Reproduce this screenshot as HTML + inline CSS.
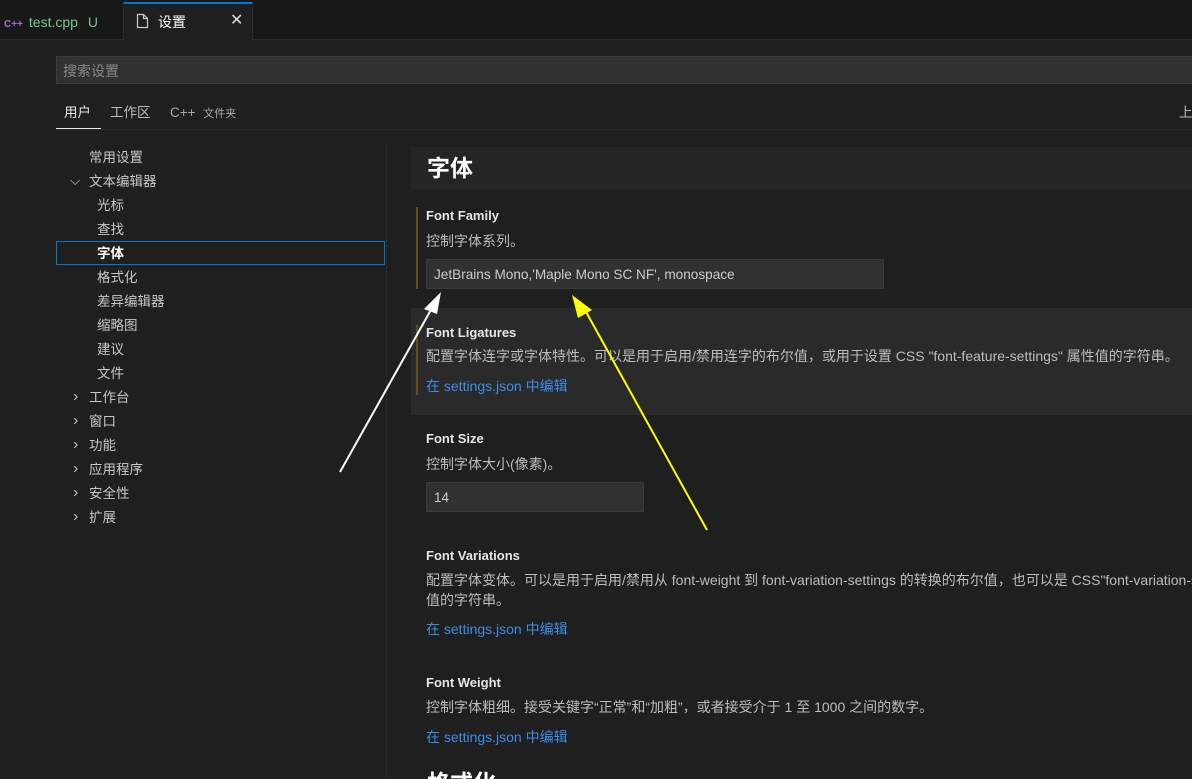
<!DOCTYPE html>
<html><head><meta charset="utf-8"><style>
*{margin:0;padding:0;box-sizing:border-box}
html,body{width:1192px;height:779px;overflow:hidden}
body{background:#1f1f1f;font-family:"Liberation Sans","Noto Sans CJK SC",sans-serif;color:#ccc;position:relative;font-size:13px;line-height:1.2}
.a{position:absolute;white-space:nowrap}
.t{font-weight:bold;color:#e6e6e6;font-size:13px}
.d{color:#bdbdbd;font-size:14px}
.l{color:#3b8eea;font-size:14px}
.nav{font-size:13.5px;color:#c8c8c8}
.ch{font-size:16px;color:#bbb}
</style></head><body>
<div class="a" style="left:0;top:0;width:1192px;height:40px;background:#181818;border-bottom:1px solid #2b2b2b"></div>
<div class="a" style="left:4px;top:14px;font-size:14px"><span style="color:#a074c4;font-size:10px;font-weight:bold">C++</span><span style="color:#73c991;margin-left:6px">test.cpp</span> <span style="color:#73c991;margin-left:6px">U</span></div>
<div class="a" style="left:123px;top:2px;width:130px;height:39px;background:#1f1f1f;border-top:2px solid #0078d4;border-left:1px solid #2b2b2b;border-right:1px solid #2b2b2b"></div>
<svg class="a" style="left:136px;top:13px" width="13" height="16" viewBox="0 0 13 16"><path d="M1.5 1.5h6l4 4v9h-10z M7.5 1.5v4h4" fill="none" stroke="#ccc" stroke-width="1.2"/></svg>
<div class="a" style="left:158px;top:14px;color:#fff;font-size:14px">设置</div>
<div class="a" style="left:230px;top:11px;color:#ddd;font-size:16px">✕</div>
<div class="a" style="left:56px;top:56px;width:1140px;height:28px;background:#313131;border:1px solid #3c3c3c"></div>
<div class="a" style="left:63px;top:63px;color:#8a8a8a;font-size:14px">搜索设置</div>
<div class="a" style="left:56px;top:129px;width:1140px;height:1px;background:#2b2b2b"></div>
<div class="a" style="left:64px;top:105px;color:#e6e6e6;font-size:13.5px">用户</div>
<div class="a" style="left:56px;top:128px;width:45px;height:1px;background:#e6e6e6"></div>
<div class="a" style="left:110px;top:105px;color:#bbb;font-size:13.5px">工作区</div>
<div class="a" style="left:170px;top:105px;color:#aaa;font-size:13.5px">C++ <span style="font-size:11px;margin-left:4px">文件夹</span></div>
<div class="a" style="left:1179px;top:105px;color:#bbb;font-size:13.5px">上</div>
<div class="a" style="left:386px;top:146px;width:1px;height:633px;background:#2b2b2b"></div>
<div class="a nav" style="left:89px;top:150px">常用设置</div>
<div class="a nav" style="left:70px;top:173px">⌵</div><div class="a nav" style="left:89px;top:174px">文本编辑器</div>
<div class="a nav" style="left:97px;top:198px">光标</div>
<div class="a nav" style="left:97px;top:222px">查找</div>
<div class="a" style="left:56px;top:241px;width:329px;height:24px;border:1px solid #0078d4"></div>
<div class="a nav" style="left:97px;top:246px;color:#fff;font-weight:bold">字体</div>
<div class="a nav" style="left:97px;top:270px">格式化</div>
<div class="a nav" style="left:97px;top:294px">差异编辑器</div>
<div class="a nav" style="left:97px;top:318px">缩略图</div>
<div class="a nav" style="left:97px;top:342px">建议</div>
<div class="a nav" style="left:97px;top:366px">文件</div>
<div class="a ch" style="left:73px;top:387px">›</div><div class="a nav" style="left:89px;top:390px">工作台</div>
<div class="a ch" style="left:73px;top:411px">›</div><div class="a nav" style="left:89px;top:414px">窗口</div>
<div class="a ch" style="left:73px;top:435px">›</div><div class="a nav" style="left:89px;top:438px">功能</div>
<div class="a ch" style="left:73px;top:459px">›</div><div class="a nav" style="left:89px;top:462px">应用程序</div>
<div class="a ch" style="left:73px;top:483px">›</div><div class="a nav" style="left:89px;top:486px">安全性</div>
<div class="a ch" style="left:73px;top:507px">›</div><div class="a nav" style="left:89px;top:510px">扩展</div>
<div class="a" style="left:411px;top:147px;width:781px;height:43px;background:#252526"></div>
<div class="a" style="left:427px;top:155px;color:#fff;font-size:23px;font-weight:bold">字体</div>
<div class="a" style="left:416px;top:207px;width:2px;height:82px;background:#5e4d22"></div>
<div class="a t" style="left:426px;top:208px">Font Family</div>
<div class="a d" style="left:426px;top:233px">控制字体系列。</div>
<div class="a" style="left:426px;top:259px;width:458px;height:30px;background:#313131;border:1px solid #3a3a3a"></div>
<div class="a" style="left:434px;top:267px;color:#ccc;font-size:13.6px">JetBrains Mono,'Maple Mono SC NF', monospace</div>
<div class="a" style="left:411px;top:308px;width:781px;height:107px;background:#2a2a2a"></div>
<div class="a" style="left:416px;top:325px;width:2px;height:70px;background:#5e4d22"></div>
<div class="a t" style="left:426px;top:325px">Font Ligatures</div>
<div class="a d" style="left:426px;top:348px">配置字体连字或字体特性。可以是用于启用/禁用连字的布尔值，或用于设置 CSS "font-feature-settings" 属性值的字符串。</div>
<div class="a l" style="left:426px;top:378px">在 settings.json 中编辑</div>
<div class="a t" style="left:426px;top:431px">Font Size</div>
<div class="a d" style="left:426px;top:456px">控制字体大小(像素)。</div>
<div class="a" style="left:426px;top:482px;width:218px;height:30px;background:#313131;border:1px solid #3a3a3a"></div>
<div class="a" style="left:434px;top:490px;color:#ccc;font-size:13.5px">14</div>
<div class="a t" style="left:426px;top:548px">Font Variations</div>
<div class="a d" style="left:426px;top:572px">配置字体变体。可以是用于启用/禁用从 font-weight 到 font-variation-settings 的转换的布尔值，也可以是 CSS"font-variation-settings"</div>
<div class="a d" style="left:426px;top:592px">值的字符串。</div>
<div class="a l" style="left:426px;top:621px">在 settings.json 中编辑</div>
<div class="a t" style="left:426px;top:675px">Font Weight</div>
<div class="a d" style="left:426px;top:699px">控制字体粗细。接受关键字“正常”和“加粗”，或者接受介于 1 至 1000 之间的数字。</div>
<div class="a l" style="left:426px;top:729px">在 settings.json 中编辑</div>
<div class="a" style="left:427px;top:770px;color:#fff;font-size:23px;font-weight:bold">格式化</div>
<svg class="a" style="left:0;top:0" width="1192" height="779">
<line x1="340" y1="472" x2="432" y2="308" stroke="#fff" stroke-width="2"/>
<polygon points="441,292 424,309 437,314" fill="#fff"/>
<line x1="707" y1="530" x2="585" y2="310" stroke="#ffff00" stroke-width="2"/>
<polygon points="572,295 578,318 592,310" fill="#ffff00"/>
</svg>
</body></html>
